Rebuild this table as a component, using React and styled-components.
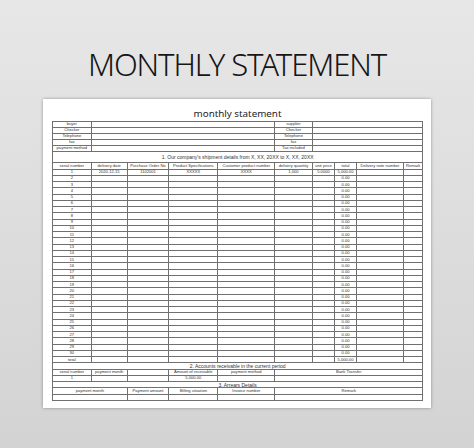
import React from "react";
import styled, { createGlobalStyle } from "styled-components";

const GlobalStyle = createGlobalStyle`
  html, body {
    margin: 0;
    padding: 0;
  }
  body {
    font-family: "Noto Sans", sans-serif;
  }
`;

const LINE = "#707070";

const Page = styled.div`
  width: 474px;
  height: 448px;
  overflow: hidden;
  background: linear-gradient(#e7e7e7, #d3d3d3);
  display: flex;
  flex-direction: column;
  align-items: center;
`;

const Heading = styled.h1`
  margin: 48px 0 19px;
  font-family: "Noto Sans", sans-serif;
  font-weight: 300;
  font-size: 31px;
  line-height: 32px;
  letter-spacing: -1.1px;
  color: #161616;
`;

const Paper = styled.div`
  width: 388px;
  height: 309px;
  box-sizing: border-box;
  padding-left: 9px;
  background: #fff;
  box-shadow: 0 0 3px rgba(0, 0, 0, 0.35);
`;

const Caption = styled.div`
  width: 371px;
  height: 22px;
  box-sizing: border-box;
  padding-bottom: 2px;
  display: flex;
  align-items: flex-end;
  justify-content: center;
  font-size: 9.8px;
  line-height: 11px;
  color: #1e1e1e;
`;

const Sheet = styled.div`
  display: grid;
  width: fit-content;
  grid-template-columns: 38.7px 36px 41.6px 49px 57px 37.4px 22.6px 21.4px 47.6px 19px;
  grid-template-rows: repeat(5, 6px) 11.3px 6.3px repeat(37, 6.25px);
  border-top: 1px solid ${LINE};
  border-left: 1px solid ${LINE};
`;

const Cell = styled.div`
  grid-column: span ${(p) => p.$span || 1};
  box-sizing: border-box;
  border-right: 1px solid ${LINE};
  border-bottom: 1px solid ${LINE};
  display: flex;
  align-items: center;
  justify-content: center;
  overflow: hidden;
  font-family: "Liberation Sans", sans-serif;
  font-size: ${(p) => (p.$title ? "5px" : "4.1px")};
  line-height: 4.4px;
  color: #333;
  white-space: ${(p) => (p.$wrap ? "normal" : "nowrap")};
  text-align: center;
`;

const partyRows = [
  ["buyer", "supplier"],
  ["Checker", "Checker"],
  ["Telephone", "Telephone"],
  ["fax", "fax"],
  ["payment method", "Tax included"],
];

const headers = [
  "serial number",
  "delivery date",
  "Purchase Order No",
  "Product Specifications",
  "Customer product number",
  "delivery quantity",
  "unit price",
  "total",
  "Delivery note number",
  "Remark",
];

const firstRow = ["1", "2020-12-15", "1102001", "XXXXX", "XXXX", "1,000", "5.0000", "5,000.00", "", ""];

function Row({ values }) {
  return values.map((v, i) => <Cell key={i}>{v}</Cell>);
}

export default function App() {
  const rows = [];
  for (let n = 2; n <= 30; n++) {
    rows.push([String(n), "", "", "", "", "", "", "0.00", "", ""]);
  }

  return (
    <>
      <GlobalStyle />
      <Page>
        <Heading>MONTHLY STATEMENT</Heading>
        <Paper>
          <Caption>monthly statement</Caption>
          <Sheet>
            {partyRows.map(([left, right]) => (
              <React.Fragment key={left + right}>
                <Cell>{left}</Cell>
                <Cell $span={4} />
                <Cell>{right}</Cell>
                <Cell $span={4} />
              </React.Fragment>
            ))}

            <Cell $span={10} $title>
              1. Our company's shipment details from X, XX, 20XX to X, XX, 20XX
            </Cell>
            {headers.map((h) => (
              <Cell key={h} $wrap={h === "delivery quantity"}>
                {h}
              </Cell>
            ))}
            <Row values={firstRow} />
            {rows.map((r) => (
              <Row key={r[0]} values={r} />
            ))}
            <Row values={["total", "", "", "", "", "", "", "5,000.00", "", ""]} />

            <Cell $span={10} $title>
              2. Accounts receivable in the current period
            </Cell>
            <Cell>serial number</Cell>
            <Cell>payment month</Cell>
            <Cell />
            <Cell>Amount of receivable</Cell>
            <Cell>payment method</Cell>
            <Cell $span={5}>Bank Transfer</Cell>
            <Cell>1</Cell>
            <Cell />
            <Cell />
            <Cell>5,000.00</Cell>
            <Cell />
            <Cell $span={5} />

            <Cell $span={10} $title>
              3. Arrears Details
            </Cell>
            <Cell $span={2}>payment month</Cell>
            <Cell>Payment amount</Cell>
            <Cell>Billing situation</Cell>
            <Cell>Invoice number</Cell>
            <Cell $span={5}>Remark</Cell>
            <Cell $span={2} />
            <Cell />
            <Cell />
            <Cell />
            <Cell $span={5} />
          </Sheet>
        </Paper>
      </Page>
    </>
  );
}
